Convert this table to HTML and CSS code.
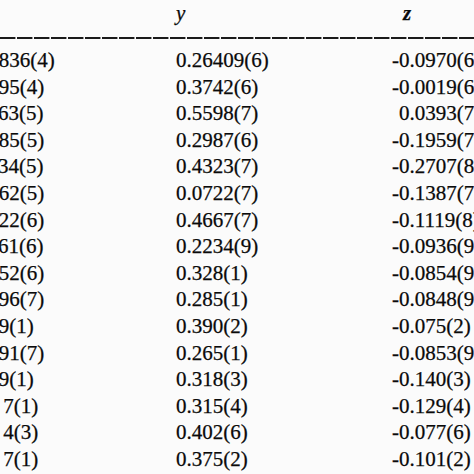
FILE: index.html
```html
<!DOCTYPE html>
<html lang="en">
<head>
  <meta charset="UTF-8">
  <title>Atomic coordinates</title>
  <link rel="stylesheet" href="styles.css">
</head>
<body>

  <div class="coords">
    <div class="head">
      <span class="col"><i>x</i></span>
      <span class="col"><i>y</i></span>
      <span class="col zhead"><i>z</i></span>
    </div>

    <div class="rule"></div>

    <div class="rows">
      <span>0.20836(4)</span><span>0.26409(6)</span><span>-0.0970(6)</span>
      <span>0.2095(4)</span><span>0.3742(6)</span><span>-0.0019(6)</span>
      <span>0.1163(5)</span><span>0.5598(7)</span><span class="pos">0.0393(7)</span>
      <span>0.2085(5)</span><span>0.2987(6)</span><span>-0.1959(7)</span>
      <span>0.1134(5)</span><span>0.4323(7)</span><span>-0.2707(8)</span>
      <span>0.3162(5)</span><span>0.0722(7)</span><span>-0.1387(7)</span>
      <span>0.3022(6)</span><span>0.4667(7)</span><span>-0.1119(8)</span>
      <span>0.1161(6)</span><span>0.2234(9)</span><span>-0.0936(9)</span>
      <span>0.4052(6)</span><span>0.328(1)</span><span>-0.0854(9)</span>
      <span>0.3096(7)</span><span>0.285(1)</span><span>-0.0848(9)</span>
      <span>0.209(1)</span><span>0.390(2)</span><span>-0.075(2)</span>
      <span>0.2491(7)</span><span>0.265(1)</span><span>-0.0853(9)</span>
      <span>0.309(1)</span><span>0.318(3)</span><span>-0.140(3)</span>
      <span>0.11 7(1)</span><span>0.315(4)</span><span>-0.129(4)</span>
      <span>0.11 4(3)</span><span>0.402(6)</span><span>-0.077(6)</span>
      <span>0.11 7(1)</span><span>0.375(2)</span><span>-0.101(2)</span>
    </div>
  </div>

</body>
</html>
```

FILE: styles.css
```css
body {
  margin: 0;
  background-color: #fbfbfb;
  color: #0a0a0a;
  font-family: "Liberation Serif", "Times New Roman", serif;
  font-size: 21px;
  overflow: hidden;
  -webkit-text-stroke: 0.25px #0a0a0a;
}

/* table of coordinates, first column runs off the left edge */
.coords {
  margin-left: -38px;
  width: 540px;
}

.head,
.rows {
  display: grid;
  grid-template-columns: 214px 216px auto;
}

.head {
  line-height: 26px;
}

.head i {
  font-style: italic;
}

.zhead {
  padding-left: 11px;
  font-weight: bold;
}

.rule {
  margin-top: 11px;
  margin-left: 38px;
  height: 2px;
  background: repeating-linear-gradient(to right, #1a1a1a 0 15px, #9a9a9a 15px 16px, transparent 16px 17px);
}

.rows {
  padding-top: 8px;
  line-height: 26.6px;
  white-space: pre;
}

.rows .pos {
  padding-left: 7px;
}
```
